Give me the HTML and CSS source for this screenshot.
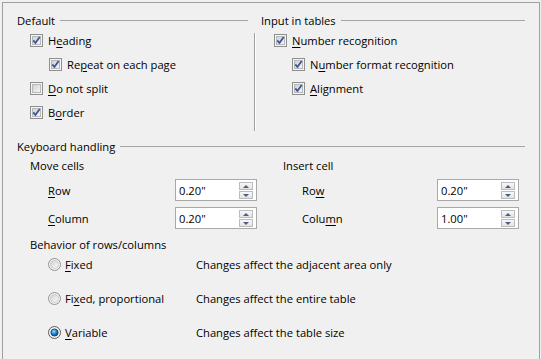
FILE: index.html
```html
<!DOCTYPE html>
<html lang="en">
<head>
<meta charset="utf-8">
<title>Table options</title>
<link rel="stylesheet" href="styles.css">
</head>
<body>
<svg class="defs" width="0" height="0" aria-hidden="true">
  <defs>
    <linearGradient id="cbg" x1="0" y1="0" x2="1" y2="1">
      <stop offset="0" stop-color="#cfcfcf"/>
      <stop offset="1" stop-color="#f7f7f7"/>
    </linearGradient>
    <linearGradient id="rbg" x1="0" y1="0" x2="1" y2="1">
      <stop offset="0" stop-color="#d2d2d2"/>
      <stop offset="1" stop-color="#fbfbfb"/>
    </linearGradient>
    <radialGradient id="rdot" cx="0.4" cy="0.35" r="0.7">
      <stop offset="0" stop-color="#9fe2fb"/>
      <stop offset="0.45" stop-color="#2d8fd5"/>
      <stop offset="1" stop-color="#0c3f78"/>
    </radialGradient>
    <symbol id="cb-on" viewBox="0 0 13 13">
      <rect x=".5" y=".5" width="12" height="12" fill="#f4f4f4" stroke="#8e8f8f"/>
      <rect x="2.5" y="2.5" width="8" height="8" fill="url(#cbg)" stroke="#b9b9b9"/>
      <path d="M3.3 6.4l2.1 2.6 4.3-6" fill="none" stroke="#3c5796" stroke-width="1.8" stroke-linejoin="round"/>
    </symbol>
    <symbol id="cb-off" viewBox="0 0 13 13">
      <rect x=".5" y=".5" width="12" height="12" fill="#f4f4f4" stroke="#8e8f8f"/>
      <rect x="2.5" y="2.5" width="8" height="8" fill="url(#cbg)" stroke="#b9b9b9"/>
    </symbol>
    <symbol id="rb-off" viewBox="0 0 13 13">
      <circle cx="6.5" cy="6.5" r="6" fill="#f3f3f3" stroke="#929292"/>
      <circle cx="6.5" cy="6.5" r="4" fill="url(#rbg)" stroke="#c4c4c4" stroke-width=".8"/>
    </symbol>
    <symbol id="rb-on" viewBox="0 0 13 13">
      <circle cx="6.5" cy="6.5" r="6" fill="#f3f3f3" stroke="#5a5a5a"/>
      <circle cx="6.5" cy="6.5" r="3.6" fill="url(#rdot)" stroke="#17365f" stroke-width=".8"/>
    </symbol>
  </defs>
</svg>

<div class="frame">
  <div class="top">
    <section class="col col-left">
      <div class="hdr"><span>Default</span><i class="rule"></i></div>
      <div class="chk"><svg class="box"><use href="#cb-on"/></svg><span>H<u>e</u>ading</span></div>
      <div class="chk ind"><svg class="box"><use href="#cb-on"/></svg><span>Re<u>p</u>eat on each page</span></div>
      <div class="chk"><svg class="box"><use href="#cb-off"/></svg><span><u>D</u>o not split</span></div>
      <div class="chk"><svg class="box"><use href="#cb-on"/></svg><span>B<u>o</u>rder</span></div>
    </section>
    <div class="vsep"></div>
    <section class="col col-right">
      <div class="hdr"><span>Input in tables</span><i class="rule"></i></div>
      <div class="chk"><svg class="box"><use href="#cb-on"/></svg><span><u>N</u>umber recognition</span></div>
      <div class="chk ind"><svg class="box"><use href="#cb-on"/></svg><span>N<u>u</u>mber format recognition</span></div>
      <div class="chk ind"><svg class="box"><use href="#cb-on"/></svg><span><u>A</u>lignment</span></div>
    </section>
  </div>

  <div class="hdr kb-hdr"><span>Keyboard handling</span><i class="rule"></i></div>
  <div class="kb">
    <div class="kbcol kb-left">
      <div class="sub">Move cells</div>
      <div class="field f1"><span class="lbl"><u>R</u>ow</span>
        <div class="spin"><span class="val">0.20"</span><span class="btns"><i class="up"></i><i class="dn"></i></span></div>
      </div>
      <div class="field f2"><span class="lbl"><u>C</u>olumn</span>
        <div class="spin"><span class="val">0.20"</span><span class="btns"><i class="up"></i><i class="dn"></i></span></div>
      </div>
    </div>
    <div class="kbcol kb-right">
      <div class="sub">Insert cell</div>
      <div class="field f1"><span class="lbl">Ro<u>w</u></span>
        <div class="spin"><span class="val">0.20"</span><span class="btns"><i class="up"></i><i class="dn"></i></span></div>
      </div>
      <div class="field f2"><span class="lbl">Colu<u>m</u>n</span>
        <div class="spin"><span class="val">1.00"</span><span class="btns"><i class="up"></i><i class="dn"></i></span></div>
      </div>
    </div>
  </div>

  <div class="sub beh">Behavior of rows/columns</div>
  <div class="radios">
    <div class="rad"><span class="rl"><svg class="box"><use href="#rb-off"/></svg><span><u>F</u>ixed</span></span><span class="desc">Changes affect the adjacent area only</span></div>
    <div class="rad"><span class="rl"><svg class="box"><use href="#rb-off"/></svg><span>Fi<u>x</u>ed, proportional</span></span><span class="desc">Changes affect the entire table</span></div>
    <div class="rad"><span class="rl"><svg class="box"><use href="#rb-on"/></svg><span><u>V</u>ariable</span></span><span class="desc">Changes affect the table size</span></div>
  </div>
</div>
</body>
</html>
```

FILE: styles.css
```css
html, body {
  margin: 0;
  padding: 0;
  background: #f0f0f0;
  height: 359px;
  overflow: hidden;
}
body {
  font-family: "Open Sans", "Noto Sans", sans-serif;
  font-size: 11.2px;
  color: #000;
}
.defs {
  display: block;
  width: 0;
  height: 0;
  overflow: hidden;
}
u {
  text-decoration-thickness: 1px;
  text-underline-offset: 2px;
}
.frame {
  margin: 2px 0 0 2px;
  width: 538px;
  height: 357px;
  box-sizing: border-box;
  border: 1px solid #a0a0a0;
  border-bottom: none;
  padding: 9px 14px 0 14px;
}
.top {
  display: flex;
  align-items: flex-start;
}
.col-left { width: 231px; }
.col-right { width: 264px; }
.vsep {
  width: 1px;
  height: 98px;
  margin: 21px 6px 0 6px;
  background: #a0a0a0;
  box-shadow: 1px 0 0 #ffffff;
}
.hdr {
  display: flex;
  align-items: center;
  height: 16px;
  white-space: nowrap;
}
.rule {
  flex: 1;
  height: 1px;
  margin-left: 5px;
  margin-top: 1px;
  background: #a4a4a4;
}
.chk {
  display: flex;
  align-items: center;
  height: 24px;
  padding-left: 13px;
  white-space: nowrap;
}
.chk.ind { padding-left: 32px; }
.col-right .chk.ind { padding-left: 31px; }
.box {
  width: 13px;
  height: 13px;
  flex: none;
  margin-right: 5px;
}
.kb-hdr { margin-top: 7px; }
.kb {
  display: flex;
  padding-left: 13px;
}
.kb-left { width: 253px; }
.kb-right { width: 242px; }
.sub {
  height: 16px;
  line-height: 16px;
  margin-top: 4px;
  white-space: nowrap;
}
.field {
  display: flex;
  align-items: center;
  height: 22px;
}
.field.f1 { margin-top: 5px; }
.field.f2 { margin-top: 6px; }
.lbl {
  padding-left: 18px;
  width: 127px;
  flex: none;
}
.kb-right .lbl {
  padding-left: 19px;
  width: 135px;
}
.spin {
  width: 82px;
  height: 22px;
  box-sizing: border-box;
  border: 1px solid #a9a9a9;
  background: #fff;
  display: flex;
  align-items: center;
  padding: 0 3px 0 3px;
}
.val { flex: 1; }
.btns {
  display: flex;
  flex-direction: column;
  gap: 1px;
  width: 14px;
  margin-top: 1px;
}
.btns i {
  display: flex;
  align-items: center;
  justify-content: center;
  height: 8px;
  box-sizing: border-box;
  border: 1px solid #bcbcbc;
  background: linear-gradient(#f8f8f8, #e3e3e3);
}
.btns i::before {
  content: "";
  width: 0;
  height: 0;
  border-left: 3px solid transparent;
  border-right: 3px solid transparent;
}
.btns .up::before { border-bottom: 3px solid #4c5c86; }
.btns .dn::before { border-top: 3px solid #4c5c86; }
.beh {
  margin-top: 8px;
  padding-left: 13px;
}
.radios {
  display: flex;
  flex-direction: column;
  gap: 18px;
  margin-top: 3px;
}
.rad {
  display: flex;
  align-items: center;
  height: 16px;
  padding-left: 31px;
  white-space: nowrap;
}
.rl {
  display: flex;
  align-items: center;
  width: 148px;
  flex: none;
}
.rad .box { margin-right: 4px; }
```
